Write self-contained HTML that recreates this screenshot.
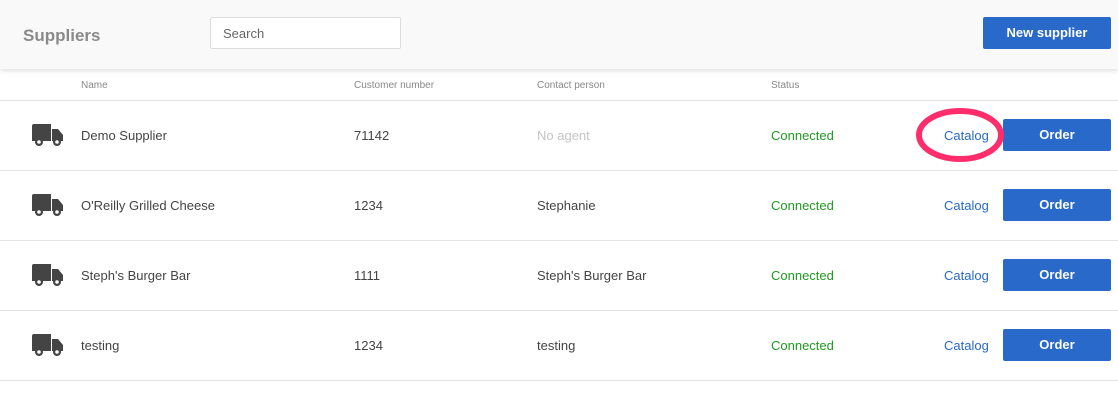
<!DOCTYPE html>
<html><head><style>
*{margin:0;padding:0;box-sizing:border-box}
body{width:1118px;height:420px;background:#fff;font-family:"Liberation Sans",sans-serif;position:relative;overflow:hidden;color:#444}
.hdr{position:absolute;left:0;top:0;width:1118px;height:69px;background:#f9f9f9;box-shadow:0 2px 4px rgba(0,0,0,.12)}
.title{position:absolute;left:23px;top:26px;font-size:17px;font-weight:bold;color:#8a8a8a}
.search{position:absolute;left:210px;top:17px;width:191px;height:32px;background:#fff;border:1px solid #ddd;border-radius:2px;font-size:13px;color:#666;padding:8px 12px}
.btn{position:absolute;background:#2969c9;color:#fff;font-weight:bold;font-size:13px;text-align:center;border-radius:2px}
.th{position:absolute;top:80px;font-size:10px;color:#888}
.line{position:absolute;left:0;width:1118px;height:1px;background:#e4e4e4}
.c{position:absolute;font-size:13px;line-height:16px}
.truck{position:absolute;left:32px}
</style></head><body>
<div class="hdr">
<div class="title">Suppliers</div>
<div class="search">Search</div>
<div class="btn" style="left:983px;top:17px;width:128px;height:32px;line-height:32px">New supplier</div>
</div>
<div class="th" style="left:81px">Name</div>
<div class="th" style="left:354px">Customer number</div>
<div class="th" style="left:537px">Contact person</div>
<div class="th" style="left:771px">Status</div>
<div class="line" style="top:100px"></div>

<svg width="0" height="0" style="position:absolute"><defs><symbol id="tr" viewBox="0 0 32 24"><path d="M0 3a2 2 0 0 1 2-2h17v17H0z M20 6h6l5 6v6H20z" fill="#444"/><circle cx="7" cy="19" r="4" fill="#444"/><circle cx="7" cy="19" r="1.8" fill="#fff"/><circle cx="25" cy="19" r="4" fill="#444"/><circle cx="25" cy="19" r="1.8" fill="#fff"/></symbol></defs></svg>

<svg class="truck" style="top:123px" width="32" height="24"><use href="#tr"/></svg>
<div class="c" style="left:81px;top:128px">Demo Supplier</div>
<div class="c" style="left:354px;top:128px">71142</div>
<div class="c" style="left:537px;top:128px;color:#c4c4c4">No agent</div>
<div class="c" style="left:771px;top:128px;color:#1f9a1f">Connected</div>
<div class="c" style="left:944px;top:128px;color:#2969c9">Catalog</div>
<div class="btn" style="left:1003px;top:119px;width:108px;height:32px;line-height:32px">Order</div>
<div class="line" style="top:170px"></div>

<svg class="truck" style="top:193px" width="32" height="24"><use href="#tr"/></svg>
<div class="c" style="left:81px;top:198px">O'Reilly Grilled Cheese</div>
<div class="c" style="left:354px;top:198px">1234</div>
<div class="c" style="left:537px;top:198px">Stephanie</div>
<div class="c" style="left:771px;top:198px;color:#1f9a1f">Connected</div>
<div class="c" style="left:944px;top:198px;color:#2969c9">Catalog</div>
<div class="btn" style="left:1003px;top:189px;width:108px;height:32px;line-height:32px">Order</div>
<div class="line" style="top:240px"></div>

<svg class="truck" style="top:263px" width="32" height="24"><use href="#tr"/></svg>
<div class="c" style="left:81px;top:268px">Steph's Burger Bar</div>
<div class="c" style="left:354px;top:268px">1111</div>
<div class="c" style="left:537px;top:268px">Steph's Burger Bar</div>
<div class="c" style="left:771px;top:268px;color:#1f9a1f">Connected</div>
<div class="c" style="left:944px;top:268px;color:#2969c9">Catalog</div>
<div class="btn" style="left:1003px;top:259px;width:108px;height:32px;line-height:32px">Order</div>
<div class="line" style="top:310px"></div>

<svg class="truck" style="top:333px" width="32" height="24"><use href="#tr"/></svg>
<div class="c" style="left:81px;top:338px">testing</div>
<div class="c" style="left:354px;top:338px">1234</div>
<div class="c" style="left:537px;top:338px">testing</div>
<div class="c" style="left:771px;top:338px;color:#1f9a1f">Connected</div>
<div class="c" style="left:944px;top:338px;color:#2969c9">Catalog</div>
<div class="btn" style="left:1003px;top:329px;width:108px;height:32px;line-height:32px">Order</div>
<div class="line" style="top:380px"></div>

<svg style="position:absolute;left:910px;top:104px" width="100" height="62"><ellipse cx="50" cy="31" rx="41" ry="24" fill="none" stroke="#ff2d6b" stroke-width="6"/></svg>
</body></html>
